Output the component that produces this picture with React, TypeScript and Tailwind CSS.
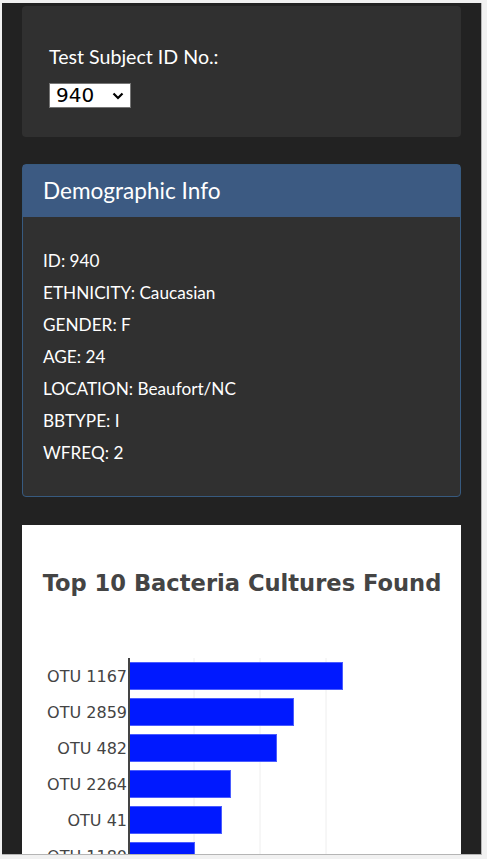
import { useState } from 'react';

const bars = [
  { label: 'OTU 1167', end: 321 },
  { label: 'OTU 2859', end: 272 },
  { label: 'OTU 482', end: 255 },
  { label: 'OTU 2264', end: 209 },
  { label: 'OTU 41', end: 200 },
  { label: 'OTU 1180', end: 173 },
  { label: 'OTU 2722', end: 160 },
];

const demo = [
  ['ID', '940'],
  ['ETHNICITY', 'Caucasian'],
  ['GENDER', 'F'],
  ['AGE', '24'],
  ['LOCATION', 'Beaufort/NC'],
  ['BBTYPE', 'I'],
  ['WFREQ', '2'],
];

function BarChart() {
  return (
    <svg width="439" height="360" className="block">
      <text
        x="220"
        y="66"
        textAnchor="middle"
        fontFamily="'DejaVu Sans', Verdana, sans-serif"
        fontWeight="bold"
        fontSize="22.6"
        fill="#444"
      >
        Top 10 Bacteria Cultures Found
      </text>
      {[172, 238, 304].map((x) => (
        <line key={x} x1={x} y1="133" x2={x} y2="360" stroke="#eee" strokeWidth="1" />
      ))}
      {bars.map((b, i) => {
        const y = 137 + i * 36;
        return (
          <g key={b.label}>
            <rect
              x="107.5"
              y={y + 0.5}
              width={b.end - 108}
              height="27"
              fill="#0019ff"
              stroke="#4a5cff"
              strokeWidth="1"
            />
            <text
              x="105"
              y={y + 20}
              textAnchor="end"
              fontFamily="'DejaVu Sans', Verdana, sans-serif"
              fontSize="16"
              fill="#444"
            >
              {b.label}
            </text>
          </g>
        );
      })}
      <line x1="107" y1="133" x2="107" y2="360" stroke="#444" strokeWidth="2" />
    </svg>
  );
}

export default function App() {
  const [subject, setSubject] = useState('940');

  return (
    <div className="w-[487px] h-[859px] overflow-hidden bg-[#f1f1f1] pt-[3px] pl-[2px]">
      <div
        className="w-[480px] h-[852px] overflow-hidden bg-[#222] border-r border-b border-[#b5b5b5] px-[20px] pt-[3px]"
        style={{ fontFamily: 'Lato, "Noto Sans", sans-serif' }}
      >
        {/* Selector well */}
        <div className="h-[131px] rounded bg-[#303030] pl-[27px] pt-[38px]">
          <label className="block text-[19.6px] leading-[26px] text-white">Test Subject ID No.:</label>
          <div className="relative mt-[13px] w-[82px] h-[25px]">
            <select
              value={subject}
              onChange={(e) => setSubject(e.target.value)}
              className="appearance-none w-full h-full bg-white text-black border border-[#767676] pl-[6px] text-[20px] leading-[23px] outline-none"
              style={{ fontFamily: '"DejaVu Sans", Verdana, sans-serif' }}
            >
              {['940', '941', '943', '944', '945'].map((id) => (
                <option key={id} value={id}>
                  {id}
                </option>
              ))}
            </select>
            <svg
              width="12"
              height="8"
              viewBox="0 0 12 8"
              className="pointer-events-none absolute left-[63px] top-[9px]"
            >
              <path d="M1.5 1.5 L6 6 L10.5 1.5" fill="none" stroke="#000" strokeWidth="2.2" />
            </svg>
          </div>
        </div>

        {/* Demographic panel */}
        <div className="mt-[27px] rounded border border-[#375a7f] bg-[#303030]">
          <div className="h-[52px] bg-[#3c5a82] pl-[20px] flex items-center">
            <h3 className="text-[22.6px] text-white">Demographic Info</h3>
          </div>
          <div className="pl-[20px] pt-[28px] pb-[27px] text-white text-[17.2px]">
            {demo.map(([k, v]) => (
              <div key={k} className="leading-[32px]">
                {k}: {v}
              </div>
            ))}
          </div>
        </div>

        {/* Bar chart */}
        <div className="mt-[28px] bg-white">
          <BarChart />
        </div>
      </div>
    </div>
  );
}
